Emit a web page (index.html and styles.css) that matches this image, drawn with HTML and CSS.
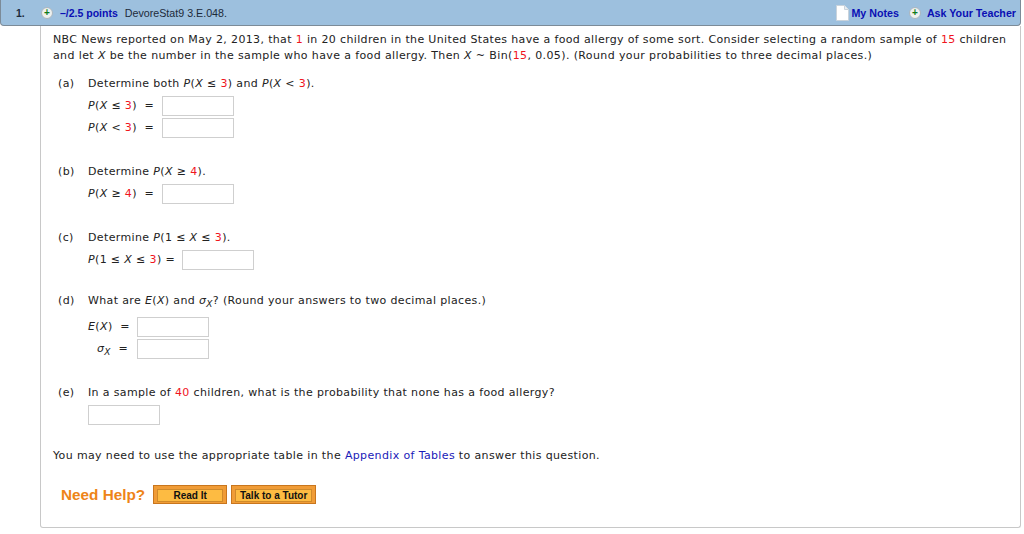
FILE: index.html
```html
<html>
<head>
    <meta charset="UTF-8">
    <title>Question 1</title>
    <link rel="stylesheet" href="styles.css">
</head>
<body>
    <div class="question-bar">
        <span class="question-number">1.</span>
        <span class="plus-icon"><span class="plus-mark">+</span></span>
        <span class="points">&ndash;/2.5 points</span>
        <span class="source">DevoreStat9 3.E.048.</span>
        <span class="bar-right">
            <svg class="note-icon" width="13" height="16" viewBox="0 0 13 16">
                <path d="M0.5 0.5H8.5L12.5 4.5V15.5H0.5Z" fill="#fff" stroke="#c9d3dc"/>
                <path d="M8.5 0.5V4.5H12.5" fill="#e8edf1" stroke="#c9d3dc"/>
            </svg>
            <span class="bar-link">My Notes</span>
            <span class="plus-icon ask-icon"><span class="plus-mark">+</span></span>
            <span class="bar-link">Ask Your Teacher</span>
        </span>
    </div>

    <div class="question-body">
        <p class="intro"><span class="first-line">NBC News reported on May 2, 2013, that <span class="red">1</span> in 20 children in the United States have a food allergy of some sort. Consider selecting a random sample of <span class="red">15</span> children</span><br>and let <i>X</i> be the number in the sample who have a food allergy. Then <i>X</i> ~ Bin(<span class="red">15</span>, 0.05). (Round your probabilities to three decimal places.)</p>

        <div class="part part-a">
            <div class="part-title"><span class="part-letter">(a)</span>Determine both <i>P</i>(<i>X</i> &le; <span class="red">3</span>) and <i>P</i>(<i>X</i> &lt; <span class="red">3</span>).</div>
            <div class="answer-row"><span class="answer-label w74"><i>P</i>(<i>X</i> &le; <span class="red">3</span>) &nbsp;=</span><span class="answer-box"></span></div>
            <div class="answer-row"><span class="answer-label w74"><i>P</i>(<i>X</i> &lt; <span class="red">3</span>) &nbsp;=</span><span class="answer-box"></span></div>
        </div>

        <div class="part part-b">
            <div class="part-title"><span class="part-letter">(b)</span>Determine <i>P</i>(<i>X</i> &ge; <span class="red">4</span>).</div>
            <div class="answer-row"><span class="answer-label w74"><i>P</i>(<i>X</i> &ge; <span class="red">4</span>) &nbsp;=</span><span class="answer-box"></span></div>
        </div>

        <div class="part part-c">
            <div class="part-title"><span class="part-letter">(c)</span>Determine <i>P</i>(<span>1</span> &le; <i>X</i> &le; <span class="red">3</span>).</div>
            <div class="answer-row"><span class="answer-label w94"><i>P</i>(1 &le; <i>X</i> &le; <span class="red">3</span>) =</span><span class="answer-box"></span></div>
        </div>

        <div class="part part-d">
            <div class="part-title"><span class="part-letter">(d)</span>What are <i>E</i>(<i>X</i>) and <i>&sigma;<sub>X</sub></i>? (Round your answers to two decimal places.)</div>
            <div class="answer-row row-gap"><span class="answer-label w49"><i>E</i>(<i>X</i>) &nbsp;=</span><span class="answer-box"></span></div>
            <div class="answer-row"><span class="answer-label w49 sigma"><i>&sigma;<sub>X</sub></i> &nbsp;=</span><span class="answer-box"></span></div>
        </div>

        <div class="part part-e">
            <div class="part-title"><span class="part-letter">(e)</span>In a sample of <span class="red">40</span> children, what is the probability that none has a food allergy?</div>
            <div class="answer-row"><span class="answer-box"></span></div>
        </div>

        <p class="table-note">You may need to use the appropriate table in the <span class="blue">Appendix of Tables</span> to answer this question.</p>

        <div class="help-row">
            <span class="need-help">Need Help?</span>
            <span class="help-btn read-it"><span>Read It</span></span>
            <span class="help-btn tutor"><span>Talk to a Tutor</span></span>
        </div>
    </div>
</body>
</html>
```

FILE: styles.css
```css
body {
    margin: 0;
    width: 1021px;
    font-family: "DejaVu Sans", Verdana, sans-serif;
    font-size: 11px;
    color: #222;
    background: white;
}

.question-bar {
    display: flex;
    align-items: center;
    height: 26px;
    box-sizing: border-box;
    padding-left: 15px;
    background-color: #9dc0de;
    border: 1px solid #7c8b98;
    border-top: none;
    border-radius: 0 0 4px 4px;
    font-family: "Liberation Sans", Arial, sans-serif;
    font-size: 10.5px;
}

.question-number {
    width: 25px;
    font-weight: bold;
    color: #1c2a3a;
}

.plus-icon {
    display: flex;
    align-items: center;
    justify-content: center;
    width: 10px;
    height: 10px;
    border-radius: 50%;
    background: #eef0ee;
    border: 1px solid #aab6bf;
    margin-right: 7px;
}

.plus-mark {
    font-size: 10px;
    line-height: 10px;
    font-weight: bold;
    color: #0c7a18;
}

.points {
    font-weight: bold;
    color: #0a0fb4;
    margin-right: 7px;
}

.source {
    color: #1c2a3a;
    font-size: 10.7px;
}

.bar-right {
    display: flex;
    align-items: center;
    margin-left: auto;
    padding-right: 4px;
}

.note-icon {
    margin-right: 2px;
}

.bar-link {
    font-weight: bold;
    color: #0a0fb4;
    font-size: 10.7px;
}

.ask-icon {
    margin-left: 10px;
    margin-right: 6px;
}

.question-body {
    margin-left: 40px;
    height: 502px;
    box-sizing: border-box;
    padding: 6px 0 0 12px;
    border: 1px solid #c8c8c8;
    border-top: none;
    border-radius: 0 0 3px 3px;
    line-height: 16px;
}

.intro {
    margin: 0 0 12px;
    letter-spacing: 0.38px;
}

.first-line {
    letter-spacing: 0.35px;
}

.red {
    color: #f0141e;
}

.blue {
    color: #1a1ab8;
}

sub {
    font-size: 9px;
    line-height: 0;
}

.part {
    padding-left: 5px;
    letter-spacing: 0.36px;
}

.part-title {
    height: 16px;
    margin-bottom: 3px;
}

.part-letter {
    display: inline-block;
    width: 30px;
}

.answer-row {
    display: flex;
    align-items: center;
    height: 22px;
    padding-left: 30px;
}

.row-gap {
    margin-top: 7px;
}

.answer-label {
    display: inline-block;
    white-space: nowrap;
}

.w74 { width: 74px; }
.w94 { width: 94px; }
.w49 { width: 49px; }

.sigma {
    text-align: center;
}

.answer-box {
    display: block;
    width: 72px;
    height: 20px;
    box-sizing: border-box;
    background: white;
    border: 1px solid #cfcfcf;
}

.part-a { margin-bottom: 25px; }
.part-b { margin-bottom: 25px; }
.part-c { margin-bottom: 22px; }
.part-d { margin-bottom: 25px; }

.table-note {
    margin: 22px 0 0;
    letter-spacing: 0.365px;
}

.help-row {
    display: flex;
    align-items: center;
    margin-top: 21px;
    padding-left: 8px;
    font-family: "Liberation Sans", Arial, sans-serif;
}

.need-help {
    font-size: 15.3px;
    font-weight: bold;
    color: #ee8418;
    margin-right: 8px;
}

.help-btn {
    display: block;
    box-sizing: border-box;
    height: 19px;
    padding: 3px;
    margin-right: 4px;
    background: #f09c37;
    border: 1px solid #c9761d;
}

.help-btn span {
    display: block;
    height: 11px;
    line-height: 11px;
    text-align: center;
    background: #fdbb42;
    border: 1px solid #d08a2a;
    font-size: 10px;
    font-weight: bold;
    color: #111;
}

.read-it { width: 74px; }
.tutor { width: 85px; }
```
